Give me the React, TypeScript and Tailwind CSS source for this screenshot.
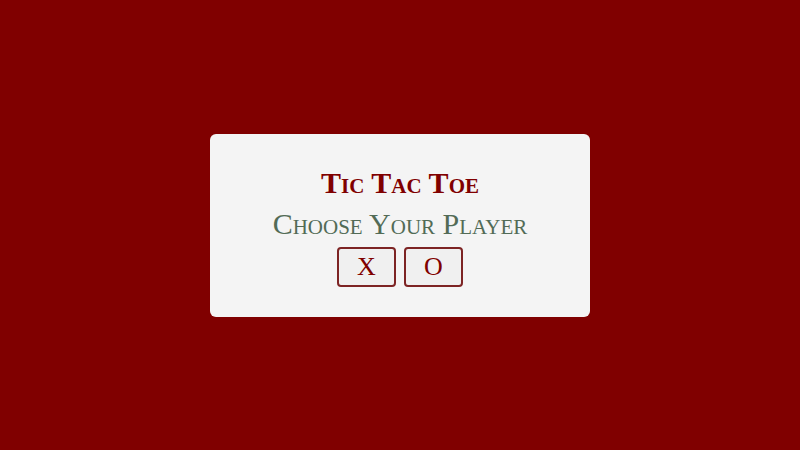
export default function App() {
  return (
    <div className="flex h-[450px] w-[800px] items-center justify-center bg-[#800000] font-['Liberation_Serif',serif]">
      <div className="flex h-[183px] w-[380px] flex-col items-center justify-center rounded-md bg-[#f4f4f4]">
        <h1 className="text-[30px] leading-[40px] font-bold text-[#800000] [font-variant:small-caps]">Tic Tac Toe</h1>
        <h2 className="text-[30px] leading-[42px] text-[#526b56] [font-variant:small-caps]">Choose Your Player</h2>
        <div className="mt-[2px] flex gap-2">
          <button className="h-[40px] w-[59px] rounded border-2 border-[#7d2424] bg-[#f0f0f0] text-[26px] leading-none text-[#800000]">X</button>
          <button className="h-[40px] w-[59px] rounded border-2 border-[#7d2424] bg-[#f0f0f0] text-[26px] leading-none text-[#800000]">O</button>
        </div>
      </div>
    </div>
  );
}
